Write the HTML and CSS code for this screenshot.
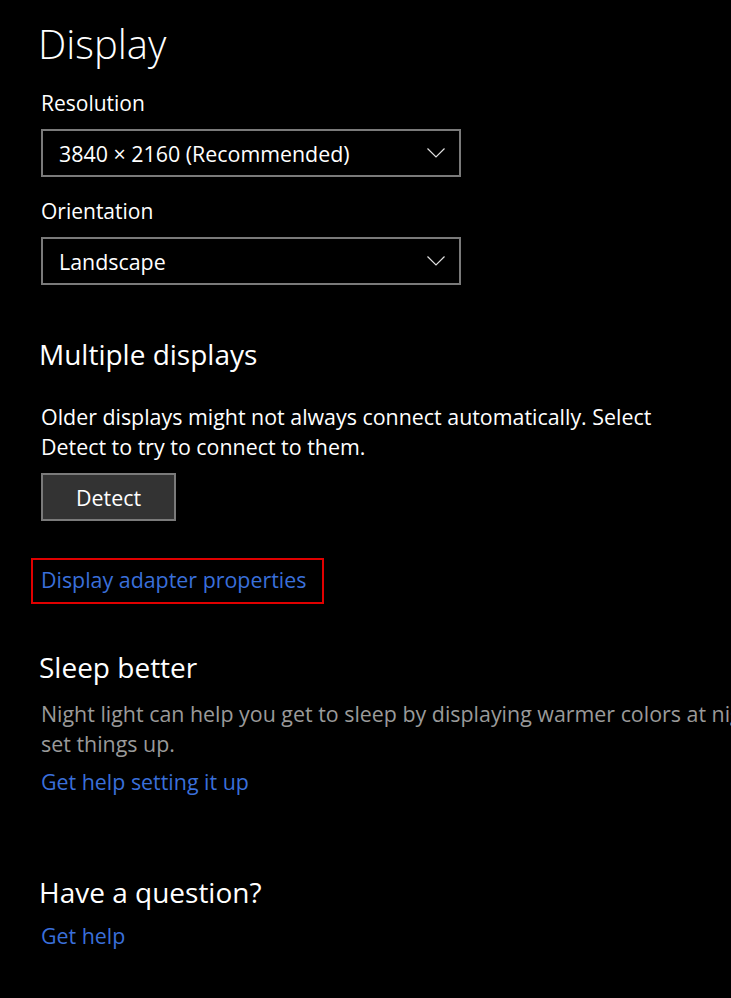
FILE: index.html
```html
<!DOCTYPE html>
<html lang="en">
<head>
  <meta charset="UTF-8" />
  <meta name="viewport" content="width=device-width, initial-scale=1.0"/>
  <title>Display settings</title>
  <link rel="stylesheet" href="styles.css">
</head>
<body>

  <div class="page">
    <h1 class="title">Display</h1>

    <div class="field">
      <div class="label">Resolution</div>
      <div class="select">
        <span>3840 × 2160 (Recommended)</span>
        <svg class="chevron" width="18" height="10" viewBox="0 0 18 10">
          <polyline points="0.5,0.5 9,9 17.5,0.5" fill="none" stroke="#e0e0e0" stroke-width="1.2"/>
        </svg>
      </div>
    </div>

    <div class="field">
      <div class="label">Orientation</div>
      <div class="select">
        <span>Landscape</span>
        <svg class="chevron" width="18" height="10" viewBox="0 0 18 10">
          <polyline points="0.5,0.5 9,9 17.5,0.5" fill="none" stroke="#e0e0e0" stroke-width="1.2"/>
        </svg>
      </div>
    </div>

    <h2 class="section multi">Multiple displays</h2>
    <p class="text">Older displays might not always connect automatically. Select<br>Detect to try to connect to them.</p>
    <button class="btn">Detect</button>

    <div class="marked">
      <a class="link">Display adapter properties</a>
    </div>

    <h2 class="section sleep">Sleep better</h2>
    <p class="text muted">Night light can help you get to sleep by displaying warmer colors at night. Select Night light settings to<br>set things up.</p>
    <a class="link help">Get help setting it up</a>

    <h2 class="section question">Have a question?</h2>
    <a class="link">Get help</a>
  </div>

</body>
</html>
```

FILE: styles.css
```css
body {
  margin: 0;
  background: #000;
  color: #fff;
  font-family: 'Open Sans', 'Noto Sans', sans-serif;
  overflow: hidden;
}

.page {
  padding: 18px 0 0 41px;
  width: 1100px;
}

.title {
  margin: 0 0 0 -3px;
  font-size: 40px;
  font-weight: 300;
  line-height: 52px;
}

.field {
  margin-top: 19px;
}

.field + .field {
  margin-top: 20px;
}

.label {
  font-size: 21px;
  line-height: 28px;
  margin-bottom: 12px;
}

.select {
  box-sizing: border-box;
  width: 420px;
  height: 48px;
  border: 2px solid #7a7a7a;
  display: flex;
  align-items: center;
  justify-content: space-between;
  padding: 0 14px 0 16px;
  font-size: 21.4px;
}

.section {
  margin: 51px 0 0 -2px;
  font-size: 28px;
  font-weight: 400;
  line-height: 36px;
}

.text {
  margin: 30px 0 0;
  font-size: 21.4px;
  line-height: 30px;
  white-space: nowrap;
}

.muted {
  color: #9a9a9a;
}

.btn {
  display: block;
  margin-top: 11px;
  box-sizing: border-box;
  width: 135px;
  height: 48px;
  background: #333;
  border: 2px solid #7a7a7a;
  color: #fff;
  font-family: inherit;
  font-size: 21.4px;
  padding: 0;
}

.marked {
  margin: 37px 0 0 -10px;
  box-sizing: border-box;
  width: 293px;
  height: 46px;
  border: 2px solid #e00000;
  padding: 0 0 3px 8px;
  display: flex;
  align-items: center;
}

.link {
  display: block;
  color: #3a6fda;
  font-size: 21.4px;
  line-height: 30px;
}

.sleep {
  margin-top: 45px;
}

.sleep + .text {
  margin-top: 14px;
}

.help {
  margin-top: 8px;
}

.question {
  margin-top: 77px;
}

.question + .link {
  margin-top: 11px;
}
```
